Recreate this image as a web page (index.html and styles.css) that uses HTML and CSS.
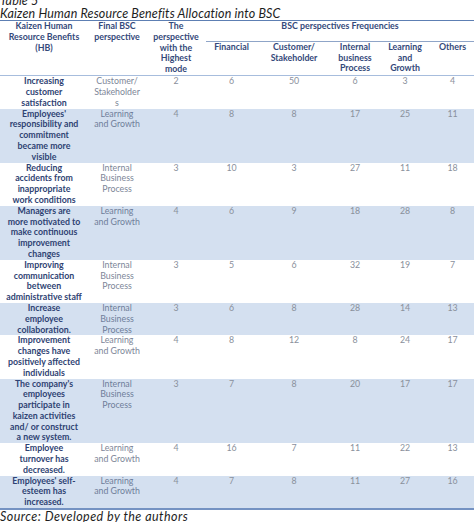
FILE: index.html
```html
<!DOCTYPE html>
<html>
<head>
<meta charset="utf-8">
<link rel="stylesheet" href="styles.css">
</head>
<body>
<div class="cap">Table 5</div>
<div class="cap">Kaizen Human Resource Benefits Allocation into BSC</div>
<table class="tbl">
<colgroup>
<col class="c1"><col class="c2"><col class="c3"><col class="c4"><col class="c5"><col class="c6"><col class="c7"><col class="c8">
</colgroup>
<thead>
<tr>
<th rowspan="2">Kaizen Human<br>Resource Benefits<br>(HB)</th>
<th rowspan="2">Final BSC<br>perspective</th>
<th rowspan="2">The<br>perspective<br>with the<br>Highest<br>mode</th>
<th colspan="5" class="grp">BSC perspectives Frequencies</th>
</tr>
<tr class="sub">
<th>Financial</th>
<th>Customer/<br>Stakeholder</th>
<th>Internal<br>business<br>Process</th>
<th>Learning<br>and<br>Growth</th>
<th>Others</th>
</tr>
</thead>
<tbody>
<tr><td class="hb">Increasing<br>customer<br>satisfaction</td><td class="bp">Customer/<br>Stakeholder<br>s</td><td>2</td><td>6</td><td>50</td><td>6</td><td>3</td><td>4</td></tr>
<tr class="sh"><td class="hb">Employees'<br>responsibility and<br>commitment<br>became more<br>visible</td><td class="bp">Learning<br>and Growth</td><td>4</td><td>8</td><td>8</td><td>17</td><td>25</td><td>11</td></tr>
<tr><td class="hb">Reducing<br>accidents from<br>inappropriate<br>work conditions</td><td class="bp">Internal<br>Business<br>Process</td><td>3</td><td>10</td><td>3</td><td>27</td><td>11</td><td>18</td></tr>
<tr class="sh"><td class="hb">Managers are<br>more motivated to<br>make continuous<br>improvement<br>changes</td><td class="bp">Learning<br>and Growth</td><td>4</td><td>6</td><td>9</td><td>18</td><td>28</td><td>8</td></tr>
<tr><td class="hb">Improving<br>communication<br>between<br>administrative staff</td><td class="bp">Internal<br>Business<br>Process</td><td>3</td><td>5</td><td>6</td><td>32</td><td>19</td><td>7</td></tr>
<tr class="sh"><td class="hb">Increase<br>employee<br>collaboration.</td><td class="bp">Internal<br>Business<br>Process</td><td>3</td><td>6</td><td>8</td><td>28</td><td>14</td><td>13</td></tr>
<tr><td class="hb">Improvement<br>changes have<br>positively affected<br>individuals</td><td class="bp">Learning<br>and Growth</td><td>4</td><td>8</td><td>12</td><td>8</td><td>24</td><td>17</td></tr>
<tr class="sh"><td class="hb">The company's<br>employees<br>participate in<br>kaizen activities<br>and/ or construct<br>a new system.</td><td class="bp">Internal<br>Business<br>Process</td><td>3</td><td>7</td><td>8</td><td>20</td><td>17</td><td>17</td></tr>
<tr><td class="hb">Employee<br>turnover has<br>decreased.</td><td class="bp">Learning<br>and Growth</td><td>4</td><td>16</td><td>7</td><td>11</td><td>22</td><td>13</td></tr>
<tr class="sh last"><td class="hb">Employees' self-<br>esteem has<br>increased.</td><td class="bp">Learning<br>and Growth</td><td>4</td><td>7</td><td>8</td><td>11</td><td>27</td><td>16</td></tr>
</tbody>
</table>
<div class="cap src">Source: Developed by the authors</div>
</body>
</html>
```
FILE: styles.css
```css
html, body {
  margin: 0;
  padding: 0;
  background: #ffffff;
}
body {
  margin-top: -6px;
  width: 474px;
  overflow: hidden;
}
.cap {
  font-family: "Lato", "DejaVu Sans", sans-serif;
  font-style: italic;
  font-size: 12.5px;
  line-height: 13px;
  color: #1e1e1e;
  white-space: nowrap;
  letter-spacing: 0.15px;
}
.src {
  line-height: 13px;
  margin-top: 0;
  letter-spacing: 0.45px;
}
.tbl {
  width: 474px;
  table-layout: fixed;
  border-collapse: collapse;
  border-top: 1px solid #5d7fb3;
  font-family: "Lato", "DejaVu Sans", sans-serif;
  font-size: 8.8px;
  line-height: 10.8px;
}
.c1 { width: 88px; }
.c2 { width: 58px; }
.c3 { width: 60px; }
.c4 { width: 51px; }
.c5 { width: 74px; }
.c6 { width: 48px; }
.c7 { width: 52px; }
.c8 { width: 43px; }
.tbl th, .tbl td {
  padding: 0;
  vertical-align: top;
  text-align: center;
  white-space: nowrap;
  overflow: visible;
}
.tbl th {
  font-weight: 700;
  color: #34497a;
}
.tbl .grp {
  padding-bottom: 9px;
}
.tbl .sub th {
  border-top: 1px solid #8fa5c8;
  padding-bottom: 1px;
}
.tbl thead {
  border-bottom: 1px solid #a7bddd;
}
.tbl td {
  color: #8a909c;
}
.tbl td.hb {
  font-weight: 700;
  color: #2f4373;
}
.tbl td.bp {
  color: #7d8698;
}
.tbl tr.sh td {
  background: #d4e0f0;
}
.tbl tr.sh td.bp {
  color: #6f7e9a;
}
.tbl tr.last td {
  border-bottom: 2px solid #7492c2;
}
```
